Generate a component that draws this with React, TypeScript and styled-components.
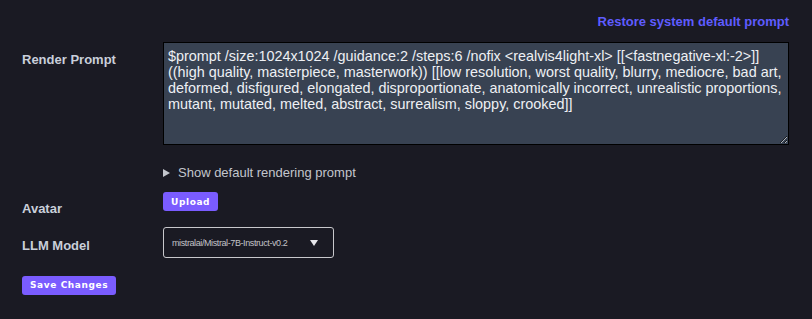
import styled, { createGlobalStyle } from "styled-components";

const GlobalStyle = createGlobalStyle`
    html, body {
        margin: 0;
        padding: 0;
        background: #1a1a23;
        font-family: "Liberation Sans", Arial, sans-serif;
    }
`;

const Page = styled.div`
    width: 812px;
    height: 319px;
    box-sizing: border-box;
    padding: 13px 23px 0 22px;
    background: #1a1a23;
`;

const TopBar = styled.div`
    display: flex;
    justify-content: flex-end;
    height: 29px;
`;

const RestoreLink = styled.a`
    color: #5f5cff;
    font-size: 13px;
    font-weight: bold;
    cursor: pointer;
    line-height: 18px;
`;

const Row = styled.div<{ $top?: number; $align?: string }>`
    display: grid;
    grid-template-columns: 141px 1fr;
    align-items: ${(p) => p.$align || "start"};
    margin-top: ${(p) => p.$top || 0}px;
`;

const Label = styled.label<{ $pad?: number }>`
    color: #c9cfda;
    font-size: 13px;
    line-height: 15px;
    font-weight: bold;
    padding-top: ${(p) => p.$pad || 0}px;
`;

const PromptBox = styled.textarea`
    width: 626px;
    height: 103px;
    box-sizing: border-box;
    background: #384252;
    border: 1px solid #000;
    color: #eef0f4;
    font-family: "Liberation Sans", Arial, sans-serif;
    font-size: 14.4px;
    line-height: 16px;
    padding: 5px 2px 5px 4px;
    margin: 0;
    resize: vertical;
    outline: none;
`;

const Details = styled.details`
    grid-column: 2;
    color: #c3c6cd;
    font-size: 13px;
`;

const Summary = styled.summary`
    cursor: pointer;
    list-style: none;
    display: flex;
    align-items: center;
    gap: 8px;
    &::-webkit-details-marker {
        display: none;
    }
`;

const Triangle = styled.span`
    width: 0;
    height: 0;
    border-top: 4px solid transparent;
    border-bottom: 4px solid transparent;
    border-left: 7px solid #c3c6cd;
`;

const Button = styled.button`
    background: #7a5cff;
    color: #fff;
    border: none;
    border-radius: 3px;
    font-family: "DejaVu Sans", sans-serif;
    font-weight: bold;
    font-size: 9px;
    letter-spacing: 0.6px;
    height: 19px;
    padding: 0 8px;
    cursor: pointer;
    justify-self: start;
`;

const Select = styled.div`
    width: 171px;
    height: 31px;
    box-sizing: border-box;
    border: 1px solid #c8c8cc;
    border-radius: 3px;
    display: flex;
    align-items: center;
    justify-content: space-between;
    padding: 0 15px 0 8px;
    color: #c3c3c8;
    font-size: 9px;
    letter-spacing: -0.4px;
`;

const Arrow = styled.span`
    width: 0;
    height: 0;
    border-left: 4.5px solid transparent;
    border-right: 4.5px solid transparent;
    border-top: 6px solid #e6e6ea;
    margin-top: 1px;
`;

const Footer = styled.div`
    margin-top: 16px;
`;

const PROMPT =
    "$prompt /size:1024x1024 /guidance:2 /steps:6 /nofix <realvis4light-xl> [[<fastnegative-xl:-2>]] ((high quality, masterpiece, masterwork)) [[low resolution, worst quality, blurry, mediocre, bad art, deformed, disfigured, elongated, disproportionate, anatomically incorrect, unrealistic proportions, mutant, mutated, melted, abstract, surrealism, sloppy, crooked]]";

function App() {
    return (
        <Page>
            <GlobalStyle />
            <TopBar>
                <RestoreLink>Restore system default prompt</RestoreLink>
            </TopBar>
            <Row>
                <Label $pad={10}>Render Prompt</Label>
                <PromptBox defaultValue={PROMPT} spellCheck={false} />
            </Row>
            <Row $top={20}>
                <Details>
                    <Summary>
                        <Triangle />
                        Show default rendering prompt
                    </Summary>
                </Details>
            </Row>
            <Row $top={12}>
                <Label $pad={9}>Avatar</Label>
                <Button>Upload</Button>
            </Row>
            <Row $top={11} $align="center">
                <Label $pad={6}>LLM Model</Label>
                <Select>
                    mistralai/Mistral-7B-Instruct-v0.2
                    <Arrow />
                </Select>
            </Row>
            <Footer>
                <Button>Save Changes</Button>
            </Footer>
        </Page>
    );
}

export default App;
